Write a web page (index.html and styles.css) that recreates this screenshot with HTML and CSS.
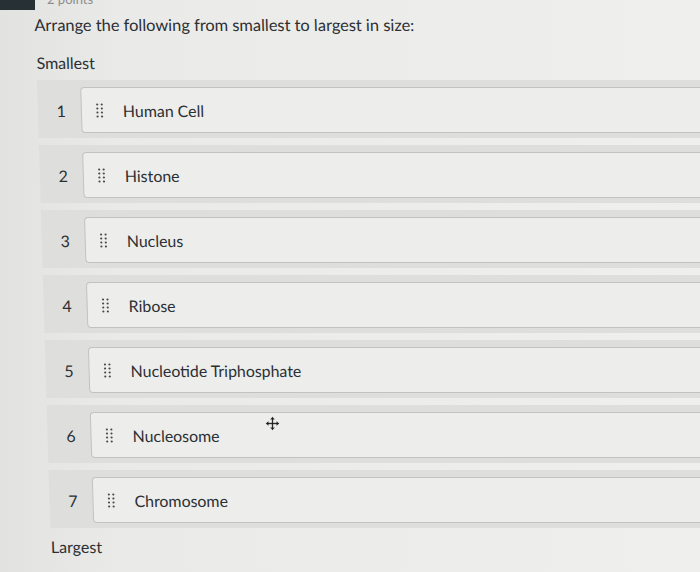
FILE: index.html
```html
<!doctype html>
<html lang="en">
<head>
  <meta charset="utf-8">
  <title>Ordering question</title>
  <link rel="stylesheet" href="styles.css">
</head>
<body>
  <div class="page">
    <div class="topbar">
      <span class="badge"></span>
      <span class="points">2 points</span>
    </div>
    <div class="question">
      <p class="prompt">Arrange the following from smallest to largest in size:</p>
      <p class="end-label">Smallest</p>
      <ol class="rank-list">
        <li class="rank-row">
          <span class="rank-num">1</span>
          <div class="rank-card">
            <svg class="grip" viewBox="0 0 8 15" aria-hidden="true"><g><circle cx="1.5" cy="1.5" r="1.1"/><circle cx="6" cy="1.5" r="1.1"/><circle cx="1.5" cy="5.5" r="1.1"/><circle cx="6" cy="5.5" r="1.1"/><circle cx="1.5" cy="9.5" r="1.1"/><circle cx="6" cy="9.5" r="1.1"/><circle cx="1.5" cy="13.5" r="1.1"/><circle cx="6" cy="13.5" r="1.1"/></g></svg>
            <span class="rank-text">Human Cell</span>
          </div>
        </li>
        <li class="rank-row">
          <span class="rank-num">2</span>
          <div class="rank-card">
            <svg class="grip" viewBox="0 0 8 15" aria-hidden="true"><g><circle cx="1.5" cy="1.5" r="1.1"/><circle cx="6" cy="1.5" r="1.1"/><circle cx="1.5" cy="5.5" r="1.1"/><circle cx="6" cy="5.5" r="1.1"/><circle cx="1.5" cy="9.5" r="1.1"/><circle cx="6" cy="9.5" r="1.1"/><circle cx="1.5" cy="13.5" r="1.1"/><circle cx="6" cy="13.5" r="1.1"/></g></svg>
            <span class="rank-text">Histone</span>
          </div>
        </li>
        <li class="rank-row">
          <span class="rank-num">3</span>
          <div class="rank-card">
            <svg class="grip" viewBox="0 0 8 15" aria-hidden="true"><g><circle cx="1.5" cy="1.5" r="1.1"/><circle cx="6" cy="1.5" r="1.1"/><circle cx="1.5" cy="5.5" r="1.1"/><circle cx="6" cy="5.5" r="1.1"/><circle cx="1.5" cy="9.5" r="1.1"/><circle cx="6" cy="9.5" r="1.1"/><circle cx="1.5" cy="13.5" r="1.1"/><circle cx="6" cy="13.5" r="1.1"/></g></svg>
            <span class="rank-text">Nucleus</span>
          </div>
        </li>
        <li class="rank-row">
          <span class="rank-num">4</span>
          <div class="rank-card">
            <svg class="grip" viewBox="0 0 8 15" aria-hidden="true"><g><circle cx="1.5" cy="1.5" r="1.1"/><circle cx="6" cy="1.5" r="1.1"/><circle cx="1.5" cy="5.5" r="1.1"/><circle cx="6" cy="5.5" r="1.1"/><circle cx="1.5" cy="9.5" r="1.1"/><circle cx="6" cy="9.5" r="1.1"/><circle cx="1.5" cy="13.5" r="1.1"/><circle cx="6" cy="13.5" r="1.1"/></g></svg>
            <span class="rank-text">Ribose</span>
          </div>
        </li>
        <li class="rank-row">
          <span class="rank-num">5</span>
          <div class="rank-card">
            <svg class="grip" viewBox="0 0 8 15" aria-hidden="true"><g><circle cx="1.5" cy="1.5" r="1.1"/><circle cx="6" cy="1.5" r="1.1"/><circle cx="1.5" cy="5.5" r="1.1"/><circle cx="6" cy="5.5" r="1.1"/><circle cx="1.5" cy="9.5" r="1.1"/><circle cx="6" cy="9.5" r="1.1"/><circle cx="1.5" cy="13.5" r="1.1"/><circle cx="6" cy="13.5" r="1.1"/></g></svg>
            <span class="rank-text">Nucleotide Triphosphate</span>
          </div>
        </li>
        <li class="rank-row">
          <span class="rank-num">6</span>
          <div class="rank-card">
            <svg class="grip" viewBox="0 0 8 15" aria-hidden="true"><g><circle cx="1.5" cy="1.5" r="1.1"/><circle cx="6" cy="1.5" r="1.1"/><circle cx="1.5" cy="5.5" r="1.1"/><circle cx="6" cy="5.5" r="1.1"/><circle cx="1.5" cy="9.5" r="1.1"/><circle cx="6" cy="9.5" r="1.1"/><circle cx="1.5" cy="13.5" r="1.1"/><circle cx="6" cy="13.5" r="1.1"/></g></svg>
            <span class="rank-text">Nucleosome</span>
          </div>
        </li>
        <li class="rank-row">
          <span class="rank-num">7</span>
          <div class="rank-card">
            <svg class="grip" viewBox="0 0 8 15" aria-hidden="true"><g><circle cx="1.5" cy="1.5" r="1.1"/><circle cx="6" cy="1.5" r="1.1"/><circle cx="1.5" cy="5.5" r="1.1"/><circle cx="6" cy="5.5" r="1.1"/><circle cx="1.5" cy="9.5" r="1.1"/><circle cx="6" cy="9.5" r="1.1"/><circle cx="1.5" cy="13.5" r="1.1"/><circle cx="6" cy="13.5" r="1.1"/></g></svg>
            <span class="rank-text">Chromosome</span>
          </div>
        </li>
      </ol>
      <p class="end-label largest">Largest</p>
    </div>
    <!-- move cursor hovering over the list -->
    <svg class="move-cursor" viewBox="0 0 16 16" aria-hidden="true">
      <path d="M8 0.5 L11 4 H9 V7 H12 V5 L15.5 8 L12 11 V9 H9 V12 H11 L8 15.5 L5 12 H7 V9 H4 V11 L0.5 8 L4 5 V7 H7 V4 H5 Z" />
    </svg>
  </div>
</body>
</html>
```

FILE: styles.css
```css
:root {
  --page-bg: #eaeae8;
  --band-bg: #dededc;
  --card-bg: #ededeb;
  --card-border: #c2c2c0;
  --ink: #2b3034;
  --grip: #444a4e;
}

*,
*::before,
*::after {
  box-sizing: border-box;
}

html,
body {
  margin: 0;
  height: 100%;
}

body {
  background: linear-gradient(90deg, #e2e2e0 0, var(--page-bg) 120px, #efefed 100%);
  color: var(--ink);
  font-family: Lato, "Open Sans", "Liberation Sans", sans-serif;
  overflow: hidden;
}

.page {
  position: relative;
  height: 572px;
  overflow: hidden;
}

.topbar {
  display: flex;
  align-items: flex-end;
  height: 10px;
  overflow: hidden;
}

.badge {
  width: 35px;
  height: 10px;
  background: #273035;
}

.points {
  margin: 0 0 4px 12px;
  font-size: 13px;
  line-height: 13px;
  color: #8a8e90;
}

.question {
  padding-left: 34px;
  transform: skewX(1.7deg);
  transform-origin: 0 0;
}

.prompt {
  margin: 3px 0 0;
  font-size: 16.4px;
  line-height: 24px;
}

.end-label {
  margin: 14px 0 0 1px;
  font-size: 16px;
  line-height: 24px;
}

.largest {
  margin-top: 7px;
}

.rank-list {
  list-style: none;
  margin: 5px -40px 0 1px;
  padding: 0;
  display: flex;
  flex-direction: column;
  gap: 7px;
}

.rank-row {
  display: flex;
  align-items: center;
  height: 58px;
  padding: 7px 0 5px;
  background: var(--band-bg);
}

.rank-num {
  width: 43px;
  padding-right: 15px;
  text-align: right;
  font-size: 16px;
}

.rank-card {
  flex: 1;
  display: flex;
  align-items: center;
  height: 46px;
  padding-left: 14px;
  background: var(--card-bg);
  border: 1px solid var(--card-border);
  border-radius: 4px;
}

.grip {
  width: 8px;
  height: 15px;
  fill: var(--grip);
}

.rank-text {
  margin-left: 19px;
  font-size: 15.9px;
}

.move-cursor {
  position: absolute;
  left: 265px;
  top: 416px;
  width: 15px;
  height: 15px;
  fill: #1c1c1c;
  stroke: #f4f4f4;
  stroke-width: 0.7;
}
```
